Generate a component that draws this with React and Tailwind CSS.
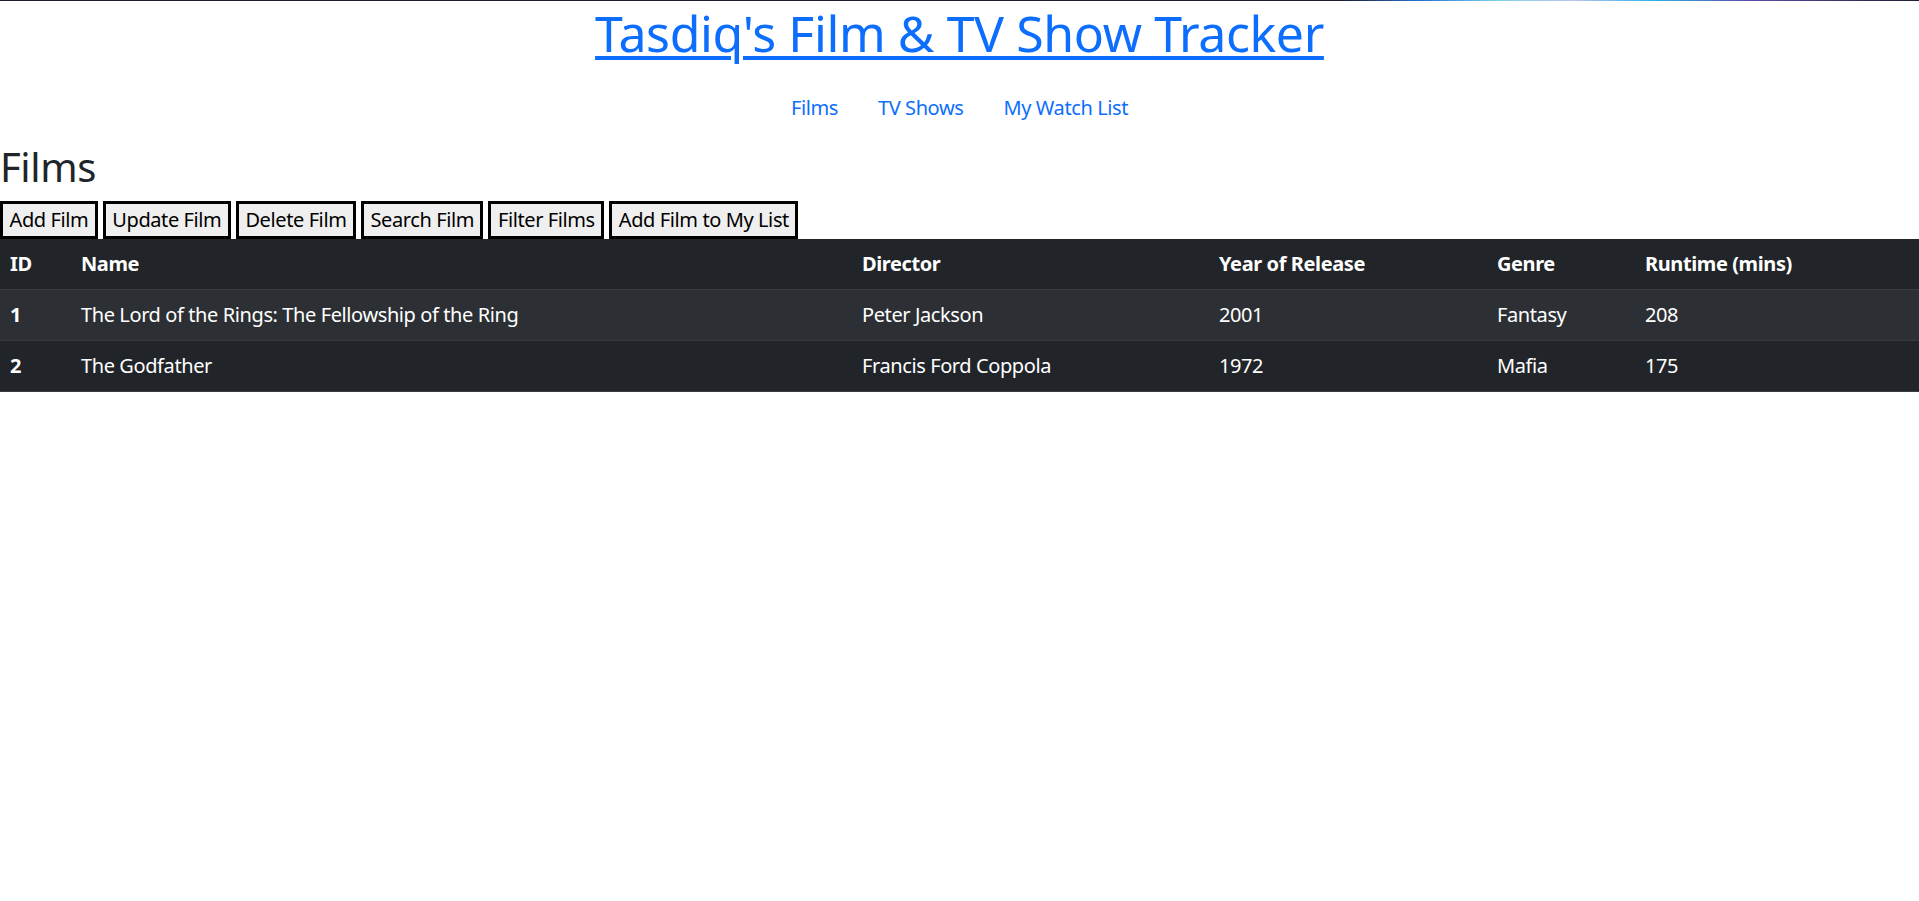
import React from "react";

const films = [
  { id: 1, name: "The Lord of the Rings: The Fellowship of the Ring", director: "Peter Jackson", year: 2001, genre: "Fantasy", runtime: 208 },
  { id: 2, name: "The Godfather", director: "Francis Ford Coppola", year: 1972, genre: "Mafia", runtime: 175 },
];

const buttons = ["Add Film", "Update Film", "Delete Film", "Search Film", "Filter Films", "Add Film to My List"];

export default function App() {
  return (
    <div className="min-h-[901px] bg-white font-['Noto_Sans',sans-serif] text-[20px] tracking-[-0.02em] text-[#212529]">
      <div className="h-px bg-[linear-gradient(90deg,#1c1f33_0%,#1c1f33_70%,#2a6fd6_74%,#7fd0e8_78%,#b9c3f0_82%,#2fb4e8_86%,#5a4fa8_91%,#1c1f33_100%)]" />
      <h1 className="mt-[2px] mb-[10px] text-center text-[50px] font-normal leading-[60px]">
        <a href="#" className="text-[#0d6efd] underline decoration-[4px] underline-offset-[4px]">
          Tasdiq's Film &amp; TV Show Tracker
        </a>
      </h1>
      <nav className="mt-[20px] flex justify-center">
        {["Films", "TV Shows", "My Watch List"].map((l) => (
          <a key={l} href="#" className="px-[20px] py-[10px] leading-[30px] text-[#0d6efd]">
            {l}
          </a>
        ))}
      </nav>
      <h2 className="mt-[10px] mb-[10px] text-[40px] font-normal leading-[48px]">Films</h2>
      <div className="flex gap-[5px]">
        {buttons.map((b) => (
          <button
            key={b}
            className="flex h-[38px] items-center border-[3px] border-black bg-[#efefef] px-[6.5px] text-[20px] leading-[30px] text-black"
          >
            {b}
          </button>
        ))}
      </div>
      <table className="w-full table-fixed border-collapse bg-[#212529] text-left text-white">
        <colgroup>
          <col className="w-[71px]" />
          <col className="w-[781px]" />
          <col className="w-[357px]" />
          <col className="w-[278px]" />
          <col className="w-[148px]" />
          <col />
        </colgroup>
        <thead>
          <tr className="border-b border-[#373b3e]">
            {["ID", "Name", "Director", "Year of Release", "Genre", "Runtime (mins)"].map((h) => (
              <th key={h} className="px-[10px] py-[10px] font-bold leading-[30px]">
                {h}
              </th>
            ))}
          </tr>
        </thead>
        <tbody>
          {films.map((f, i) => (
            <tr key={f.id} className={`border-b border-[#373b3e] ${i % 2 === 0 ? "bg-[#2c3034]" : "bg-[#212529]"}`}>
              <td className="px-[10px] py-[10px] font-bold leading-[30px]">{f.id}</td>
              <td className="px-[10px] py-[10px] leading-[30px]">{f.name}</td>
              <td className="px-[10px] py-[10px] leading-[30px]">{f.director}</td>
              <td className="px-[10px] py-[10px] leading-[30px]">{f.year}</td>
              <td className="px-[10px] py-[10px] leading-[30px]">{f.genre}</td>
              <td className="px-[10px] py-[10px] leading-[30px]">{f.runtime}</td>
            </tr>
          ))}
        </tbody>
      </table>
    </div>
  );
}
